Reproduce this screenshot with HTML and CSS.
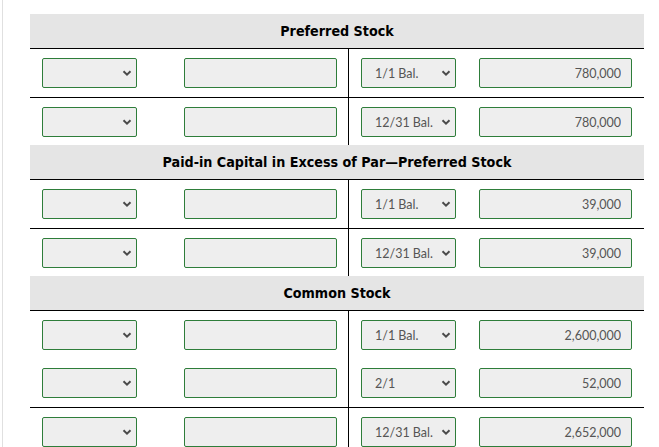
FILE: index.html
```html
<!DOCTYPE html>
<html lang="en">
  <head>
    <meta charset="UTF-8" />
    <meta name="viewport" content="width=device-width, initial-scale=1.0" />
    <title>T-Accounts - Stockholders' Equity</title>
    <link rel="stylesheet" href="styles.css">
  </head>
  <body>
    <div class="page">
      <div class="ledger">
        <!-- Preferred Stock -->
        <div class="account-title">Preferred Stock</div>
        <div class="row line">
          <div class="side debit">
            <span class="pick-wrap"><select class="pick"><option></option></select><svg class="chev" viewBox="0 0 10 6"><path d="M1.5 1.2 L5 4.6 L8.5 1.2" /></svg></span>
            <input class="amt" type="text" value="" />
          </div>
          <div class="side credit">
            <span class="pick-wrap"><select class="pick"><option>1/1 Bal.</option></select><svg class="chev" viewBox="0 0 10 6"><path d="M1.5 1.2 L5 4.6 L8.5 1.2" /></svg></span>
            <input class="amt" type="text" value="780,000" />
          </div>
        </div>
        <div class="row last">
          <div class="side debit">
            <span class="pick-wrap"><select class="pick"><option></option></select><svg class="chev" viewBox="0 0 10 6"><path d="M1.5 1.2 L5 4.6 L8.5 1.2" /></svg></span>
            <input class="amt" type="text" value="" />
          </div>
          <div class="side credit">
            <span class="pick-wrap"><select class="pick"><option>12/31 Bal.</option></select><svg class="chev" viewBox="0 0 10 6"><path d="M1.5 1.2 L5 4.6 L8.5 1.2" /></svg></span>
            <input class="amt" type="text" value="780,000" />
          </div>
        </div>

        <!-- Paid-in Capital -->
        <div class="account-title">Paid-in Capital in Excess of Par&mdash;Preferred Stock</div>
        <div class="row line">
          <div class="side debit">
            <span class="pick-wrap"><select class="pick"><option></option></select><svg class="chev" viewBox="0 0 10 6"><path d="M1.5 1.2 L5 4.6 L8.5 1.2" /></svg></span>
            <input class="amt" type="text" value="" />
          </div>
          <div class="side credit">
            <span class="pick-wrap"><select class="pick"><option>1/1 Bal.</option></select><svg class="chev" viewBox="0 0 10 6"><path d="M1.5 1.2 L5 4.6 L8.5 1.2" /></svg></span>
            <input class="amt" type="text" value="39,000" />
          </div>
        </div>
        <div class="row last">
          <div class="side debit">
            <span class="pick-wrap"><select class="pick"><option></option></select><svg class="chev" viewBox="0 0 10 6"><path d="M1.5 1.2 L5 4.6 L8.5 1.2" /></svg></span>
            <input class="amt" type="text" value="" />
          </div>
          <div class="side credit">
            <span class="pick-wrap"><select class="pick"><option>12/31 Bal.</option></select><svg class="chev" viewBox="0 0 10 6"><path d="M1.5 1.2 L5 4.6 L8.5 1.2" /></svg></span>
            <input class="amt" type="text" value="39,000" />
          </div>
        </div>

        <!-- Common Stock -->
        <div class="account-title">Common Stock</div>
        <div class="row">
          <div class="side debit">
            <span class="pick-wrap"><select class="pick"><option></option></select><svg class="chev" viewBox="0 0 10 6"><path d="M1.5 1.2 L5 4.6 L8.5 1.2" /></svg></span>
            <input class="amt" type="text" value="" />
          </div>
          <div class="side credit">
            <span class="pick-wrap"><select class="pick"><option>1/1 Bal.</option></select><svg class="chev" viewBox="0 0 10 6"><path d="M1.5 1.2 L5 4.6 L8.5 1.2" /></svg></span>
            <input class="amt" type="text" value="2,600,000" />
          </div>
        </div>
        <div class="row line">
          <div class="side debit">
            <span class="pick-wrap"><select class="pick"><option></option></select><svg class="chev" viewBox="0 0 10 6"><path d="M1.5 1.2 L5 4.6 L8.5 1.2" /></svg></span>
            <input class="amt" type="text" value="" />
          </div>
          <div class="side credit">
            <span class="pick-wrap"><select class="pick"><option>2/1</option></select><svg class="chev" viewBox="0 0 10 6"><path d="M1.5 1.2 L5 4.6 L8.5 1.2" /></svg></span>
            <input class="amt" type="text" value="52,000" />
          </div>
        </div>
        <div class="row">
          <div class="side debit">
            <span class="pick-wrap"><select class="pick"><option></option></select><svg class="chev" viewBox="0 0 10 6"><path d="M1.5 1.2 L5 4.6 L8.5 1.2" /></svg></span>
            <input class="amt" type="text" value="" />
          </div>
          <div class="side credit">
            <span class="pick-wrap"><select class="pick"><option>12/31 Bal.</option></select><svg class="chev" viewBox="0 0 10 6"><path d="M1.5 1.2 L5 4.6 L8.5 1.2" /></svg></span>
            <input class="amt" type="text" value="2,652,000" />
          </div>
        </div>
      </div>
    </div>
  </body>
</html>
```

FILE: styles.css
```css
* {
  margin: 0;
  padding: 0;
  box-sizing: border-box;
}

:root {
  --field-bg: #eeeeee;
  --field-border: #2e7d3a;
  --field-text: #555555;
  --title-bg: #e5e5e5;
  --rule: #000000;
}

body {
  font-family: "Lato", "Liberation Sans", sans-serif;
  background: #ffffff;
  color: #000000;
  overflow: hidden;
}

.page {
  margin-left: 2px;
  border-left: 1px solid #e0e0e0;
  min-height: 100vh;
  padding: 14px 0 0 27px;
}

.ledger {
  width: 614px;
}

.account-title {
  background: var(--title-bg);
  height: 35px;
  border-bottom: 1px solid var(--rule);
  display: flex;
  align-items: center;
  justify-content: center;
  font-family: "DejaVu Sans Condensed", "DejaVu Sans", sans-serif;
  font-stretch: condensed;
  font-weight: bold;
  font-size: 14.2px;
}

.row {
  display: grid;
  grid-template-columns: 318px 296px;
}

.row.line {
  border-bottom: 1px solid var(--rule);
}

.side {
  display: flex;
  justify-content: space-between;
  align-items: center;
  padding: 9px 11px 9px 12px;
}

.row.last .side {
  padding-bottom: 8px;
}

.side.credit {
  border-left: 1px solid var(--rule);
  padding-left: 12px;
  padding-right: 12px;
}

.pick-wrap {
  position: relative;
  display: block;
  width: 95px;
  height: 30px;
}

.pick {
  appearance: none;
  -webkit-appearance: none;
  width: 100%;
  height: 100%;
  background: var(--field-bg);
  border: 1px solid var(--field-border);
  border-radius: 2px;
  font-family: "Lato", "Liberation Sans", sans-serif;
  font-size: 12.5px;
  color: var(--field-text);
  padding: 0 18px 0 13px;
  outline: none;
}

.chev {
  position: absolute;
  right: 5px;
  top: 12px;
  width: 10px;
  height: 6px;
  pointer-events: none;
}

.chev path {
  fill: none;
  stroke: #4a4a4a;
  stroke-width: 2;
}

.amt {
  width: 153px;
  height: 30px;
  background: var(--field-bg);
  border: 1px solid var(--field-border);
  border-radius: 2px;
  font-family: "Lato", "Liberation Sans", sans-serif;
  font-size: 12.5px;
  color: var(--field-text);
  text-align: right;
  padding: 0 10px;
  outline: none;
}
```
